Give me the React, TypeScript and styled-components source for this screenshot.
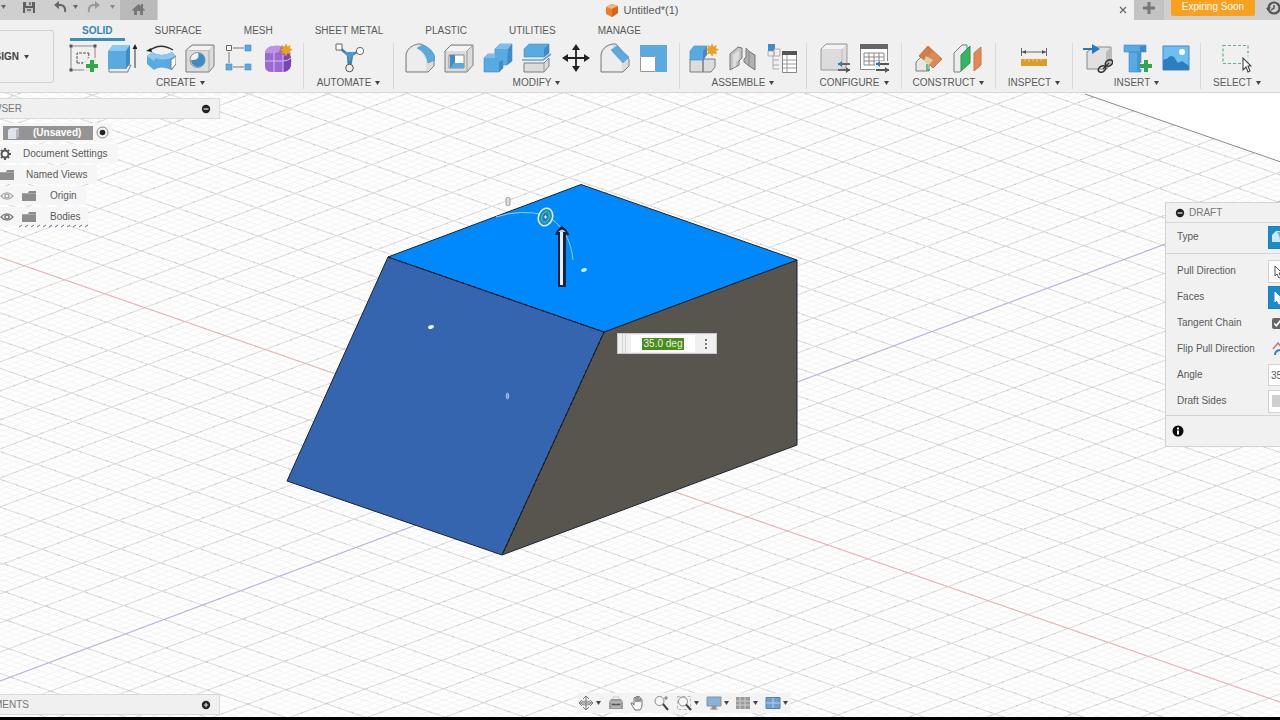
import React from "react";
import styled, { createGlobalStyle, css } from "styled-components";

const GlobalStyle = createGlobalStyle`
  * { box-sizing: border-box; }
  body { margin: 0; background: #000; overflow: hidden; }
  button, input { font: inherit; color: inherit; border: 0; padding: 0; margin: 0; background: none; }
  button { cursor: pointer; }
  svg { display: block; flex: none; }
`;

const Shell = styled.div`
  display: flex;
  flex-direction: column;
  height: 100vh;
  padding-bottom: 3px;
  background: #000;
  color: #5a5a5a;
  font: 10px/12px "Liberation Sans", Arial, sans-serif;
  white-space: nowrap;
`;

/* ---------- title bar ---------- */
const TitleBar = styled.header`
  display: flex;
  height: 20px;
  flex: none;
  background: #f0f0f0;
`;
const QuickBar = styled.div`
  display: flex;
  align-items: center;
  width: 158px;
  height: 20px;
  padding-bottom: 6px;
  background: #cfcfcf;
`;
const QuickButton = styled.button<{ $w: number }>`
  display: flex;
  justify-content: center;
  align-items: center;
  flex: none;
  width: ${(p) => p.$w}px;
  height: 14px;
`;
const HomeTab = styled.button`
  display: flex;
  justify-content: center;
  align-self: flex-start;
  width: 37px;
  height: 20px;
  padding-top: 3px;
  flex: none;
  background: #bababa;
`;
const DocTab = styled.div`
  display: flex;
  flex: 1;
  align-items: center;
  padding: 0 4px 0 10px;
`;
const DocTitle = styled.h1`
  display: flex;
  flex: 1;
  justify-content: center;
  align-items: center;
  gap: 4px;
  margin: 0;
  font-size: 11px;
  font-weight: 400;
  line-height: 14px;
`;
const CloseButton = styled.button`
  width: 14px;
  height: 14px;
  display: grid;
  place-items: center;
`;
const TitleRight = styled.div`
  display: flex;
  width: 146px;
  background: #cfcfcf;
  overflow: hidden;
`;
const NewTab = styled.button`
  display: grid;
  place-items: center;
  flex: none;
  width: 30px;
  height: 20px;
  padding-bottom: 4px;
  background: #c3c3c3;
`;
const Expiring = styled.button`
  width: 84px;
  height: 16px;
  margin: 0 11px 0 7px;
  flex: none;
  padding-bottom: 2px;
  border-radius: 0 0 2px 2px;
  background: #f9a01f;
  color: #fff;
`;
const ClockButton = styled.button`
  flex: none;
  height: 16px;
`;

/* ---------- ribbon ---------- */
const Ribbon = styled.div`
  display: flex;
  height: 73px;
  flex: none;
  background: #f0f0f0;
  border-bottom: 1px solid #d6d6d6;
`;
const Workspace = styled.button`
  display: flex;
  align-items: center;
  justify-content: flex-end;
  gap: 5px;
  width: 54px;
  height: 53px;
  margin: 10px 4px 0 0;
  padding-right: 24px;
  flex: none;
  overflow: hidden;
  border: 1px solid #d2d2d2;
  border-left: 0;
  border-radius: 0 3px 3px 0;
  color: #444;
  font-weight: 700;
`;
const RibbonMain = styled.div`
  flex: 1;
  min-width: 0;
`;
const Tabs = styled.nav`
  display: flex;
  gap: 18px;
  height: 21px;
  padding-left: 12px;
`;
const Tab = styled.button<{ $on?: boolean }>`
  height: 21px;
  padding: 3px 12px 0;
  border-bottom: 3px solid transparent;
  ${(p) =>
    p.$on &&
    css`
      color: #2f87b8;
      font-weight: 700;
      border-color: #3b8dba;
    `}
`;
const Groups = styled.div`
  display: flex;
  padding-top: 2px;
`;
const Group = styled.section<{ $w: number }>`
  width: ${(p) => p.$w}px;
  height: 46px;
  flex: none;
  display: flex;
  flex-direction: column;
  align-items: center;
  & + & { border-left: 1px solid #d9d9d9; }
`;
const Tools = styled.div`
  display: flex;
  gap: 9px;
`;
const Tool = styled.button`
  width: 30px;
  height: 30px;
`;
const GroupLabel = styled.button`
  display: flex;
  align-items: center;
  gap: 4px;
  height: 12px;
  margin-top: 4px;
`;

/* ---------- viewport ---------- */
const Viewport = styled.main`
  position: relative;
  flex: 1;
  min-height: 0;
  overflow: hidden;
  background: #fff;
`;
const Scene = styled.svg`
  width: 100%;
  height: 100%;
`;
const SidePanel = styled.div<{ $bottom?: boolean }>`
  position: absolute;
  left: 0;
  ${(p) => (p.$bottom ? "bottom: 2px;" : "top: 5px;")}
  display: flex;
  align-items: center;
  width: 220px;
  height: 21px;
  padding-right: 8px;
  background: #f0f0f0;
  border: 1px solid #dadada;
  border-left: 0;
`;
const PanelTitle = styled.h2<{ $w: number }>`
  display: flex;
  justify-content: flex-end;
  width: ${(p) => p.$w}px;
  margin: 0 auto 0 0;
  overflow: hidden;
  color: #777;
  font-size: 10px;
  font-weight: 400;
`;
const RoundButton = styled.button`
  width: 10px;
  height: 10px;
`;
const Tree = styled.ul`
  position: absolute;
  left: 0;
  top: 30px;
  margin: 0;
  padding: 0;
  list-style: none;
`;
const TreeRow = styled.li<{ $w: number }>`
  display: flex;
  align-items: center;
  width: ${(p) => p.$w}px;
  height: 19px;
  margin-bottom: 2px;
  background: #f6f6f6;
`;
const Root = styled.span`
  display: flex;
  align-items: center;
  width: 90px;
  height: 14px;
  margin: 0 3px 0 3px;
  padding-left: 4px;
  gap: 11px;
  background: #949494;
  color: #fff;
  font-weight: 700;
`;
const Slot = styled.span<{ $w: number }>`
  width: ${(p) => p.$w}px;
  flex: none;
  overflow: hidden;
`;
const SelectionMark = styled.svg`
  position: absolute;
  left: 18px;
  bottom: 0;
`;

const ValueBox = styled.div`
  position: absolute;
  left: 617px;
  top: 240px;
  display: flex;
  width: 100px;
  height: 21px;
  border: 1px solid #c9c9c9;
  background: #f0f0f0;
`;
const Grip = styled.span`
  width: 4px;
  margin-left: 4px;
  border: solid #d2d2d2;
  border-width: 0 1px;
`;
const ValueField = styled.label`
  display: grid;
  place-items: center;
  width: 64px;
  margin: 1px 0 1px 5px;
  background: #fff;
`;
const ValueInput = styled.input`
  width: 42px;
  height: 12px;
  background: #4d8a20;
  color: #e6f5da;
  text-align: center;
`;
const MoreButton = styled.button`
  flex: 1;
  display: grid;
  place-items: center;
`;

const Draft = styled.aside`
  position: absolute;
  right: 0;
  top: 109px;
  width: 115px;
  overflow: hidden;
  background: #f1f1f1;
  border: 1px solid #d3d3d3;
  border-right: 0;
`;
const DraftHead = styled.div`
  display: flex;
  align-items: center;
  gap: 4px;
  height: 20px;
  padding-left: 9px;
  border-bottom: 1px solid #d9d9d9;
  color: #777;
`;
const DraftRows = styled.div<{ $top: number; $end: number }>`
  padding: ${(p) => p.$top}px 0 ${(p) => p.$end}px;
  border-bottom: 1px solid #d3d3d3;
`;
const DraftRow = styled.div`
  display: grid;
  grid-template-columns: 91px 24px;
  align-items: center;
  height: 26px;
  padding-left: 11px;
`;
const Control = styled.button<{ $on?: boolean }>`
  width: 24px;
  height: 23px;
  padding-left: 2px;
  border: 1px solid ${(p) => (p.$on ? "#1681bd" : "#d2d2d2")};
  background: ${(p) => (p.$on ? "#1b8bc9" : "#fff")};
`;
const FlatControl = styled.button`
  width: 24px;
  height: 22px;
  padding-left: 4px;
`;
const Check = styled.input`
  width: 11px;
  height: 11px;
  margin-left: 4px;
  accent-color: #666;
`;
const AngleInput = styled.input`
  width: 48px;
  height: 22px;
  padding-left: 2px;
  background: #fff;
  border: 1px solid #d2d2d2;
`;
const DraftFoot = styled.div`
  display: flex;
  align-items: center;
  height: 30px;
  padding-left: 6px;
`;

const NavBar = styled.div`
  position: absolute;
  left: 88px;
  right: 0;
  bottom: 4px;
  width: 214px;
  height: 20px;
  margin: 0 auto;
  display: flex;
  align-items: center;
  justify-content: space-between;
  padding: 0 3px 0 1px;
  background: #f3f3f3;
`;
const NavButton = styled.button`
  display: flex;
  align-items: center;
  gap: 2px;
`;

/* ---------- shared glyphs ---------- */
const Caret = ({ c = "#444" }: { c?: string }) => (
  <svg width="5" height="4" viewBox="0 0 5 4"><path d="M0 0h5L2.5 4z" fill={c} /></svg>
);
const Minus = () => (
  <svg width="10" height="10" viewBox="0 0 10 10">
    <circle cx="5" cy="5" r="4.2" fill="#222" /><path d="M2.5 5h5" stroke="#ddd" strokeWidth="1.3" />
  </svg>
);
const Plus = () => (
  <svg width="10" height="10" viewBox="0 0 10 10">
    <circle cx="5" cy="5" r="4.2" fill="#222" /><path d="M2.8 5h4.4M5 2.8v4.4" stroke="#ddd" strokeWidth="1.2" />
  </svg>
);
const Folder = () => (
  <svg width="15" height="12" viewBox="0 0 15 12"><path d="M0 3h6l1-2h7v10H0z" fill="#8d8d8d" /><path d="M0 3.5h14" stroke="#a8a8a8" /></svg>
);
const Eye = ({ c }: { c: string }) => (
  <svg width="14" height="10" viewBox="0 0 14 10">
    <path d="M1 5Q7-1.500 13 5Q7 11.500 1 5z" fill="none" stroke={c} strokeWidth="1.2" /><circle cx="7" cy="5" r="2" fill="none" stroke={c} strokeWidth="1.5" />
  </svg>
);
const Pointer = ({ c, f }: { c: string; f: string }) => (
  <svg width="14" height="15" viewBox="0 0 14 15"><path d="M4 2v10l2-2 2 4 2-1-2-4h3z" fill={f} stroke={c} /></svg>
);

const G = "#dcdcdc";
const D = "#7d7d7d";
const B = "#5aaae2";
const DB = "#3d8cc8";

const Star = () => (
  <path d="M23 1l1.300 3 3-1.500-1 3 3 1-3 1.500 1.500 3-3.300-1-1.500 3-1.500-3-3.300 1 1.500-3-3-1.500 3-1-1-3 3 1.500z" fill="#eba21c" stroke="#d98c0c" strokeWidth=".5" />
);
const GreenPlus = () => <path d="M24 17v12M18 23h12" stroke="#2fa84a" strokeWidth="4" />;

const icons: Record<string, React.ReactNode> = {
  "Create Sketch": (<>
    <path d="M3 3h24v24H3z" fill="none" stroke="#888" />
    <path d="M9 20V10h12M9 20h6M21 10c0 6-3 9-7 10" fill="none" stroke="#555" strokeDasharray="3 1" />
    <path d="M1.500 1.500h3v3h-3zM25.500 1.500h3v3h-3zM1.500 25.500h3v3h-3z" fill="#555" /><path d="M16 15h14v15H16z" fill="#f0f0f0" opacity=".8" /><GreenPlus />
  </>),
  Extrude: (<>
    <path d="M2 25l5-3h17l-3 6v1H2z" fill="#eee" stroke={D} />
    <path d="M1 8l5-6h17v18l-4 6H1z" fill={B} /><path d="M1 8l5-6h17l-4 6z" fill="#8dc8f1" /><path d="M19 8l4-6v18l-4 6z" fill={DB} />
    <path d="M28 5v20" stroke="#333" /><path d="M28 1l-2.500 5h5z" fill="#222" />
  </>),
  Revolve: (<>
    <path d="M3 8Q14-1 27 7" fill="none" stroke="#333" strokeWidth="1.300" /><path d="M0 8l5-3 1 4z" fill="#222" />
    <path d="M1 13l5-4q9 6 20 0l4 4v8l-4 6q-12-5-18 0l-7-6z" fill={B} /><path d="M1 13l5-4q9 6 20 0l4 4q-12 6-20 2l-2 3z" fill="#8dc8f1" />
    <path d="M25 17l5-4v8l-5 6z" fill="#fff" stroke={D} />
  </>),
  Hole: (<>
    <path d="M1 7l6-5h22v21l-5 6H1z" fill={G} stroke={D} /><path d="M1 7h23v22M24 7l5-5" fill="none" stroke="#aaa" />
    <path d="M2 7l6-4h20l-4 4z" fill="#f3f3f3" /><circle cx="12.500" cy="17" r="7.500" fill="#f4f4f4" stroke="#888" /><path d="M13 10a7 7 0 1 1-7 7h2c6 0 6-4 5-7z" fill={DB} />
  </>),
  Pattern: (<>
    <path d="M9 5h11M5 9v11M9 24h11" stroke="#777" /><path d="M2.500 2.500h5v5h-5z" fill="#fff" stroke="#666" />
    <path d="M21 2h6v6h-6zM2 21h6v6H2zM21 21h6v6h-6z" fill={B} stroke={DB} strokeWidth=".6" />
  </>),
  "Create Form": (<>
    <path d="M2 10q0-3 4-6 5-2 12-1l8 7 2 6v7q-2 6-9 6H9q-7 0-7-6z" fill="#9a6ad0" />
    <path d="M2 10q1-3 4-6 6-2 12-1l-2 6q-4 2-10 1z" fill="#bb94e6" /><path d="M20 14l6-4q3 3 2 12-1 6-8 7z" fill="#7946b4" />
    <path d="M11 10v19M2 18h18q5 0 8-3M20 12v17" fill="none" stroke="#d7bdf2" strokeWidth="1" /><Star />
  </>),
  Automate: (<>
    <path d="M6 5l8 7h4l8-5M14 12l1 12M18 12l-2 12" fill="none" stroke="#3c85b5" strokeWidth="2.500" />
    <path d="M11 9h10l-5 8z" fill="#4c9ac9" />
    <path d="M2 1h6v6H2z" fill="#fff" stroke="#666" /><circle cx="26" cy="8" r="3.600" fill="#fff" stroke="#666" /><circle cx="15.500" cy="25" r="3.800" fill="#eee" stroke="#555" />
  </>),
  Fillet: (<>
    <path d="M1 29V11q2-8 12-10h3q12 5 13 15v7l-6 6z" fill={G} stroke={D} /><path d="M2 11Q5 3 13 2l8 15v11H2z" fill="#ededed" />
    <path d="M12 5l6-3q10 4 12 12v3l-7 3q-1-10-11-15z" fill={B} stroke={DB} strokeWidth=".5" />
  </>),
  Shell: (<>
    <path d="M1 8l6-6h22v20l-6 7H1z" fill={G} stroke={D} /><path d="M2 8l5-5h21l-5 5z" fill="#f4f4f4" /><path d="M23 8v21M23 8l6-6" stroke="#999" />
    <path d="M5 12h15v13H5z" fill="#fff" stroke="#888" /><path d="M6 12h5v8l9 0v5H6z" fill={B} /><path d="M6 25V12l5 0v7z" fill={DB} />
  </>),
  Combine: (<>
    <path d="M1 15l4-4h7V6l5-5h12v17l-5 4h-4v3l-4 4H1z" fill={B} stroke={DB} strokeWidth=".6" />
    <path d="M1 15l4-4h7v4zM12 6l5-5h12l-4 5z" fill="#7cbef0" /><path d="M25 6l4-5v17l-5 4zM16 19l4-2v8l-4 4z" fill={DB} />
  </>),
  "Split Body": (<>
    <path d="M2 6l5-5h20v9l-5 4H2z" fill={B} stroke={DB} strokeWidth=".6" /><path d="M22 6l5-5v9l-5 4z" fill={DB} />
    <path d="M0 17h21l8-6" fill="none" stroke="#56a5dc" strokeWidth="1.600" /><path d="M2 20h20l5-5v8l-5 6H2z" fill={G} stroke={D} /><path d="M22 20v9" stroke="#999" />
  </>),
  Move: (<>
    <path d="M15 4v22M4 15h22" stroke="#222" strokeWidth="1.800" />
    <path d="M15 1l4 6h-8zM15 29l4-6h-8zM1 15l6-4v8zM29 15l-6-4v8z" fill="#222" />
  </>),
  Chamfer: (<>
    <path d="M1 29V11q2-8 11-10h4l13 15v7l-6 6z" fill={G} stroke={D} /><path d="M2 12Q4 4 12 2l10 17v9H2z" fill="#ededed" />
    <path d="M11 7l6-4 12 11-6 6z" fill={B} stroke={DB} strokeWidth=".5" />
  </>),
  Scale: (<><path d="M1 2h27v27H17V13H1z" fill={B} /><path d="M1.500 13.500h15v15h-15z" fill="#fff" stroke="#999" /></>),
  "New Component": (<>
    <path d="M1 16h13v13H1zM14 16h12v8l-4 5h-8z" fill={G} stroke={D} /><path d="M1 8l4-5h13l-3 5v9H1z" fill={B} stroke={DB} strokeWidth=".6" /><path d="M14 8l4-5v9l-4 5z" fill={DB} /><Star />
  </>),
  Joint: (<>
    <path d="M2 11l8-7 4 1v10l-3 3v4l-9 5z" fill="#c4c4c4" stroke="#777" /><path d="M5 12l6-5v9l-3 3v4l-3 2z" fill="#dedede" />
    <path d="M18 5l4 4 5 3v15l-6-4-5-4v-3l2-2z" fill="#b0b0b0" stroke="#777" /><path d="M18 5l3 3v14" fill="none" stroke="#888" />
  </>),
  "Bill of Materials": (<>
    <path d="M1 1h7v7H1z" fill={DB} /><path d="M1 8h6v5H1zM7 6h6v7H7z" fill="#eee" stroke="#999" strokeWidth=".7" /><path d="M6 13v13M6 17h6M6 22h6M6 26h6" stroke="#aaa" />
    <path d="M15.500 9.500h14v20h-14z" fill="#fff" stroke="#888" /><path d="M15 8h15v4H15z" fill="#555" /><path d="M16 17h13M16 21h13M16 25h13M20 12v17" stroke="#999" />
  </>),
  Configure: (<>
    <path d="M1 6l5-5h21v20l-3 6H1z" fill={G} stroke="#999" /><path d="M2 6l4-4h20l-4 4z" fill="#f3f3f3" /><path d="M22 6v20" stroke="#bbb" />
    <path d="M18 21h12M18 27h12" stroke="#666" strokeWidth="2" /><path d="M18 21l4-3v6z" fill="#2582c4" /><path d="M30 27l-4-3v6z" fill="#555" />
  </>),
  "Configuration Table": (<>
    <path d="M1.500 2.500h27v24h-27z" fill="#fff" stroke="#888" /><path d="M1 1h28v5H1z" fill="#666" />
    <path d="M5 10h20v12H5zM5 14h20M5 18h20M10 10v12M15 10v12M20 10v12" fill="none" stroke="#888" /><path d="M16 18h14v12H16z" fill="#f0f0f0" />
    <path d="M17 21h13M17 27h13" stroke="#555" strokeWidth="2" /><path d="M17 21l4-3v6z" fill="#2582c4" /><path d="M30 27l-4-3v6z" fill="#555" />
  </>),
  "Offset Plane": (<>
    <path d="M2 19l5-5 8 6v8H2z" fill="#e6e6e6" stroke={D} /><path d="M5 13l9-10 14 13-9 9-6-6z" fill="#dd8a5a" stroke="#c57443" />
    <path d="M5 13l9-10 5 5-8 9z" fill="#d27c4d" /><path d="M12 13l7 4-4 5-5-4z" fill="#d3d6a2" /><path d="M13 21v6h3" fill="none" stroke="#3db36a" strokeWidth="1.500" />
  </>),
  Midplane: (<>
    <path d="M1 10l8-8h5v20l-7 7H1z" fill="#ececec" stroke={D} /><path d="M8 12l9-9v17l-9 8z" fill="#35b562" stroke="#279a50" />
    <path d="M21 10l7-6v18l-7 6z" fill="#e28a57" stroke="#c97444" />
  </>),
  Measure: (<><path d="M2 9h26M2.500 5v8M27.500 5v8" stroke="#666" /><path d="M3 9l4-2v4zM27 9l-4-2v4z" fill="#555" /><path d="M2 16h26v7H2z" fill="#dd9c24" /><path d="M6 16v2M10 16v3M14 16v2M18 16v3M22 16v2" stroke="#f4cf80" /></>),
  "Insert Derive": (<>
    <path d="M4 9l7-5h17v16l-4 6H4z" fill="#e0e0e0" stroke="#888" /><path d="M23 9l5-5v16l-5 6z" fill="#bbb" />
    <path d="M0 5h9V1l8 5-8 5V7H0z" fill="#1e7dc4" />
    <path d="M20 26l6-6" stroke="#333" strokeWidth="1.300" /><ellipse cx="19" cy="26" rx="4" ry="2.800" transform="rotate(-35 19 26)" fill="none" stroke="#333" strokeWidth="1.600" /><ellipse cx="26" cy="20" rx="4" ry="2.800" transform="rotate(-35 26 20)" fill="none" stroke="#333" strokeWidth="1.600" />
  </>),
  "Insert Fastener": (<>
    <path d="M2 2h22v7H2zM7 9h12v20H7z" fill={B} stroke={DB} strokeWidth=".6" /><path d="M18 3h6v6h-6z" fill={DB} /><path d="M15 9h4v20h-4z" fill="#4796d2" />
    <path d="M24 17v12M18 23h12" stroke="#f0f0f0" strokeWidth="6" /><GreenPlus />
  </>),
  Canvas: (<>
    <path d="M2 3h26v24H2z" fill="#70bdf1" stroke={DB} /><circle cx="21" cy="9" r="3" fill="#fff" /><path d="M2 27v-9q2-3 4-2 3-5 7-2l4 6 4-2 7 5v4z" fill="#2a7fbe" />
  </>),
  Select: (<>
    <path d="M1 2.500h25v18H1z" fill="none" stroke="#5fb482" strokeDasharray="3 2" strokeWidth="1.200" />
    <path d="M20 13h9v17H20z" fill="#f0f0f0" opacity=".7" /><path d="M21 15v12l3-3 2 5 2-1-2-5h3z" fill="#fff" stroke="#444" strokeWidth="1.100" />
  </>),
};

const groups: { name: string; w: number; tools: string[] }[] = [
  { name: "CREATE", w: 245, tools: ["Create Sketch", "Extrude", "Revolve", "Hole", "Pattern", "Create Form"] },
  { name: "AUTOMATE", w: 90, tools: ["Automate"] },
  { name: "MODIFY", w: 286, tools: ["Fillet", "Shell", "Combine", "Split Body", "Move", "Chamfer", "Scale"] },
  { name: "ASSEMBLE", w: 127, tools: ["New Component", "Joint", "Bill of Materials"] },
  { name: "CONFIGURE", w: 95, tools: ["Configure", "Configuration Table"] },
  { name: "CONSTRUCT", w: 94, tools: ["Offset Plane", "Midplane"] },
  { name: "INSPECT", w: 77, tools: ["Measure"] },
  { name: "INSERT", w: 128, tools: ["Insert Derive", "Insert Fastener", "Canvas"] },
  { name: "SELECT", w: 73, tools: ["Select"] },
];
const tabs = ["SOLID", "SURFACE", "MESH", "SHEET METAL", "PLASTIC", "UTILITIES", "MANAGE"];

/* ---------- ground grid ---------- */
const O = [150, 392.7];
const U = [40.15, 13.95];
const V = [-38.4, 14.4];
const path = (from: number[], step: number[], dir: number[], n: number) => {
  const x = from[0] + step[0] * n;
  const y = from[1] + step[1] * n;
  return `M${x - dir[0] * 45} ${y - dir[1] * 45}L${x + dir[0] * 45} ${y + dir[1] * 45}`;
};
const range = (a: number, b: number, s: number) => Array.from({ length: Math.round((b - a) / s) + 1 }, (_, i) => a + i * s);
const family = (s: number) =>
  range(-35, 40, s).map((n) => path(O, V, U, n)).join("") + range(-35, 40, s).map((n) => path(O, U, V, n)).join("");
const minor = family(0.2);
const major = family(1);

const Ground = () => (
  <Scene viewBox="0 93 1280 624" preserveAspectRatio="xMidYMid slice" aria-label="Model canvas">
    <defs>
      <clipPath id="plane"><path d="M-400-422L1085 94 1900 377V1200H-400z" /></clipPath>
    </defs>
    <g clipPath="url(#plane)" fill="none">
      <path d="M-400-422L1085 94 1900 377V1200H-400z" fill="#fefefe" />
      <path d={minor} stroke="#f3f3f3" strokeWidth=".8" />
      <path d={major} stroke="#d9d9d9" strokeWidth=".9" />
      <path d={major} stroke="#c6c6c6" strokeWidth=".9" strokeDasharray="2 12" />
      <path d={path(O, V, U, -3)} stroke="#eeb3b3" />
      <path d={path(O, U, V, 8)} stroke="#b4b4e4" />
    </g>
    <path d="M1085 94L1900 377" stroke="#8a8a8a" />
    <g stroke="#1b2430" strokeWidth="1" strokeLinejoin="round">
      <path d="M604 332L797 260V445L502 555z" fill="#57554d" />
      <path d="M388 257L604 332 502 555 287 481z" fill="#3565ae" />
      <path d="M581 184.500L797 260 604 332 388 257z" fill="#0089fd" />
    </g>
    <path d="M388 257L604 332 502 555" fill="none" stroke="#101820" strokeDasharray="3 3" />
    <path d="M496 217Q520 209 545 215 570 228 573 260" fill="none" stroke="#8fd0ff" strokeWidth="1" />
    <ellipse cx="545.500" cy="217" rx="7" ry="9" transform="rotate(20 545.500 217)" fill="#1c8fb8" stroke="#d6f1fb" strokeWidth="1.600" />
    <ellipse cx="545.500" cy="217" rx="3.500" ry="5.500" transform="rotate(20 545.500 217)" fill="#1684ae" stroke="#7cc9e4" strokeWidth=".7" />
    <path d="M544 217h3M545.500 215.500v3" stroke="#fff" />
    <path d="M562 226q6 4 7 9h-3v52h-8v-52h-3q1-5 7-9z" fill="#10253c" />
    <path d="M560 232h3v53h-3z" fill="#e9eef2" /><path d="M558.500 232q3.500-5 7 0z" fill="#c8ccd0" />
    <ellipse cx="584" cy="270" rx="3" ry="1.800" transform="rotate(-20 584 270)" fill="#cfe9ff" />
    <ellipse cx="431" cy="327" rx="3" ry="1.800" transform="rotate(-20 431 327)" fill="#f5f7fb" />
    <ellipse cx="507.500" cy="396" rx="1.300" ry="3" fill="#7c9dd0" stroke="#c6d5ee" strokeWidth=".7" />
    <rect x="506" y="197.500" width="4" height="8" rx="1.500" fill="#ddd" stroke="#888" strokeWidth=".8" />
  </Scene>
);

const nav: { name: string; caret?: boolean; art: React.ReactNode }[] = [
  { name: "Orbit", caret: true, art: <><path d="M8 2v12M2 8h12M5 4l3-3 3 3M5 12l3 3 3-3M4 5L1 8l3 3M12 5l3 3-3 3" fill="none" stroke="#777" /><ellipse cx="8" cy="8" rx="5" ry="2" fill="none" stroke="#888" /></> },
  { name: "Look At", art: <><path d="M1 7l2-3h10l2 3v7H1z" fill="#999" /><path d="M2 7h12M3 12h10M5 4V2h6v2" fill="none" stroke="#ccc" /><path d="M4 9.500h8" stroke="#555" /></> },
  { name: "Pan", art: <path d="M5 15q-3-4-4-7 2-1 3 2V3q1-2 2 0v4-5q1-2 2 0v5-5q1-1 2 0v5-3q2-1 2 1v5q0 3-2 5z" fill="#f7f7f7" stroke="#777" /> },
  { name: "Zoom", art: <><circle cx="6.500" cy="6" r="4.500" fill="#f7f7f7" stroke="#888" /><path d="M10 9l5 6" stroke="#444" strokeWidth="2" /><path d="M11 3h4M13 1v4" stroke="#777" /></> },
  { name: "Fit", caret: true, art: <><path d="M1.500 1.500h13v13h-13z" fill="none" stroke="#bbb" strokeDasharray="3 2" /><circle cx="7" cy="6.500" r="4.500" fill="#f7f7f7" stroke="#888" /><path d="M10 9.500l5 5.500" stroke="#444" strokeWidth="2" /></> },
  { name: "Display Settings", caret: true, art: <><path d="M1 2h14v9H1z" fill="#86b3db" stroke="#8a9199" /><path d="M6 11h4v3H6zM4 14h8" fill="#888" stroke="#999" /></> },
  { name: "Grid and Snaps", caret: true, art: <><path d="M1 2h14v12H1z" fill="#9b9b9b" /><path d="M1 6h14M1 10h14M5 2v12M10 2v12" stroke="#cfcfcf" /></> },
  { name: "Viewports", caret: true, art: <><path d="M1 2.500h14v11H1z" fill="#6f9fd0" stroke="#5c7fa6" /><path d="M8 3v10M1 8h14" stroke="#b7d2ec" /></> },
];

export default function App() {
  return (
    <Shell>
      <GlobalStyle />
      <TitleBar>
        <QuickBar>
          <QuickButton $w={6} aria-label="File menu"><Caret c="#666" /></QuickButton>
          <QuickButton $w={46} aria-label="Save">
            <svg width="14" height="13" viewBox="0 0 14 13"><path d="M1 1h12v11H1z" fill="#606060" /><path d="M4 1h6v4H4zM3 7h8v5H3z" fill="#c4c4c4" /><path d="M8 1v3M5 9h4" stroke="#606060" strokeWidth="1.500" /></svg>
          </QuickButton>
          <QuickButton $w={16} aria-label="Undo">
            <svg width="13" height="12" viewBox="0 0 13 12"><path d="M3 4h4q5 1 4 7" fill="none" stroke="#666" strokeWidth="2" /><path d="M0 4l5-4v8z" fill="#666" /></svg>
          </QuickButton>
          <QuickButton $w={14} aria-label="Undo history"><Caret c="#666" /></QuickButton>
          <QuickButton $w={22} aria-label="Redo">
            <svg width="13" height="12" viewBox="0 0 13 12"><path d="M10 4H6Q1 5 2 11" fill="none" stroke="#999" strokeWidth="2" /><path d="M13 4L8 0v8z" fill="#999" /></svg>
          </QuickButton>
          <QuickButton $w={16} aria-label="Redo history"><Caret c="#888" /></QuickButton>
          <HomeTab aria-label="Home">
            <svg width="13" height="13" viewBox="0 0 13 13"><path d="M0 7l6.500-6 2.500 2V1h2v4l2 2-1 1-1-1v5H8V8H5v4H2V7L1 8z" fill="#777" /></svg>
          </HomeTab>
        </QuickBar>
        <DocTab>
          <DocTitle>
            <svg width="14" height="14" viewBox="0 0 14 14"><path d="M1 4l6-3 6 2v7l-6 4-6-3z" fill="#ee7d2b" /><path d="M1 4l6-3 6 2-6 3z" fill="#f8b27c" /><path d="M7 6l6-3v7l-6 4z" fill="#d9651a" /></svg>
            Untitled*(1)
          </DocTitle>
          <CloseButton aria-label="Close document">
            <svg width="8" height="8" viewBox="0 0 8 8"><path d="M1 1l6 6M7 1L1 7" stroke="#666" strokeWidth="1.200" /></svg>
          </CloseButton>
        </DocTab>
        <TitleRight>
          <NewTab aria-label="New tab"><svg width="12" height="12" viewBox="0 0 12 12"><path d="M6 0v12M0 6h12" stroke="#777" strokeWidth="3" /></svg></NewTab>
          <Expiring>Expiring Soon</Expiring>
          <ClockButton aria-label="Job status">
            <svg width="16" height="15" viewBox="0 0 16 15"><circle cx="8" cy="7" r="5.500" fill="none" stroke="#555" strokeWidth="2.200" /><path d="M8 4v3l-3 2" fill="none" stroke="#555" strokeWidth="1.500" /><path d="M0 7l5-1-3 4z" fill="#555" /></svg>
          </ClockButton>
        </TitleRight>
      </TitleBar>

      <Ribbon>
        <Workspace>DESIGN<Caret /></Workspace>
        <RibbonMain>
          <Tabs>{tabs.map((t, i) => <Tab key={t} $on={i === 0}>{t}</Tab>)}</Tabs>
          <Groups>
            {groups.map((g) => (
              <Group key={g.name} $w={g.w}>
                <Tools>
                  {g.tools.map((t) => (
                    <Tool key={t} aria-label={t}><svg width="30" height="30" viewBox="0 0 30 30">{icons[t]}</svg></Tool>
                  ))}
                </Tools>
                <GroupLabel>{g.name}<Caret /></GroupLabel>
              </Group>
            ))}
          </Groups>
        </RibbonMain>
      </Ribbon>

      <Viewport>
        <Ground />

        <SidePanel>
          <PanelTitle $w={22}>BROWSER</PanelTitle>
          <RoundButton aria-label="Collapse browser"><Minus /></RoundButton>
        </SidePanel>
        <Tree>
          <TreeRow $w={112}>
            <Root>
              <svg width="15" height="12" viewBox="0 0 15 12"><path d="M1 3l3-2h8v8l-3 3H1z" fill="#dfe3ea" /><path d="M9 3l3-2v8l-3 3z" fill="#b5bac2" /></svg>
              (Unsaved)
            </Root>
            <svg width="13" height="13" viewBox="0 0 13 13"><circle cx="6.500" cy="6.500" r="5.500" fill="#f4f4f4" stroke="#888" /><circle cx="6.500" cy="6.500" r="2.800" fill="#222" /></svg>
          </TreeRow>
          <TreeRow $w={118}>
            <Slot $w={23}><svg width="12" height="12" viewBox="0 0 12 12"><circle cx="5" cy="6" r="3.500" fill="none" stroke="#555" strokeWidth="2" /><path d="M5 0v2M5 10v2M0 6H-1M9 6h2M1 2l1 1M9 2L8 3M1 10l1-1M9 10L8 9" stroke="#555" strokeWidth="2" /></svg></Slot>
            Document Settings
          </TreeRow>
          <TreeRow $w={97}><Slot $w={26}><Folder /></Slot>Named Views</TreeRow>
          <TreeRow $w={86}><Slot $w={22}><Eye c="#aaa" /></Slot><Slot $w={28}><Folder /></Slot>Origin</TreeRow>
          <TreeRow $w={88}><Slot $w={22}><Eye c="#777" /></Slot><Slot $w={28}><Folder /></Slot>Bodies</TreeRow>
          <SelectionMark width="72" height="5" viewBox="0 0 72 5">
            <path d="M1 4l3-2M7 4l3-2M13 4l3-2M19 4l3-2M25 4l3-2M31 4l3-2M37 4l3-2M43 4l3-2M49 4l3-2M55 4l3-2M61 4l3-2M67 4l3-2" stroke="#6d7086" />
          </SelectionMark>
        </Tree>

        <ValueBox>
          <Grip />
          <ValueField><ValueInput aria-label="Angle value" defaultValue="35.0 deg" /></ValueField>
          <MoreButton aria-label="More options"><svg width="4" height="12" viewBox="0 0 4 12"><path d="M1 1h2v2H1zM1 5h2v2H1zM1 9h2v2H1z" fill="#777" /></svg></MoreButton>
        </ValueBox>

        <Draft>
          <DraftHead><Minus />DRAFT</DraftHead>
          <DraftRows $top={1} $end={3}>
            <DraftRow>Type<Control $on aria-label="Draft type"><svg width="18" height="16" viewBox="0 0 18 16"><path d="M1 13V6l4-4h9v11z" fill="#cfe8f8" /><path d="M6 3q3 4 3 10h5V3z" fill="#6ab4e3" /></svg></Control></DraftRow>
          </DraftRows>
          <DraftRows $top={4} $end={1}>
            <DraftRow>Pull Direction<Control aria-label="Select pull direction"><Pointer c="#555" f="#fff" /></Control></DraftRow>
            <DraftRow>Faces<Control $on aria-label="Select faces"><Pointer c="#fff" f="#fff" /></Control></DraftRow>
            <DraftRow><label htmlFor="chain">Tangent Chain</label><Check id="chain" type="checkbox" defaultChecked /></DraftRow>
            <DraftRow>Flip Pull Direction<FlatControl aria-label="Flip pull direction"><svg width="18" height="16" viewBox="0 0 18 16"><path d="M1 8l5-6 4 5" fill="none" stroke="#c77" strokeWidth="1.500" /><path d="M3 14q0-5 6-5" fill="none" stroke="#2b88c8" strokeWidth="2" /></svg></FlatControl></DraftRow>
            <DraftRow><label htmlFor="angle">Angle</label><AngleInput id="angle" defaultValue="35.0 deg" /></DraftRow>
            <DraftRow>Draft Sides<Control aria-label="Draft sides"><svg width="18" height="12" viewBox="0 0 18 12"><path d="M1 0h17v12H1z" fill="#cfcfcf" /></svg></Control></DraftRow>
          </DraftRows>
          <DraftFoot>
            <svg width="12" height="12" viewBox="0 0 12 12"><circle cx="6" cy="6" r="5.500" fill="#0d0d0d" /><path d="M5 2.500h2v2H5zM5 5.500h2v4H5z" fill="#fff" /></svg>
          </DraftFoot>
        </Draft>

        <SidePanel $bottom>
          <PanelTitle $w={29}>COMMENTS</PanelTitle>
          <RoundButton aria-label="Expand comments"><Plus /></RoundButton>
        </SidePanel>

        <NavBar>
          {nav.map((n) => (
            <NavButton key={n.name} aria-label={n.name}>
              <svg width="16" height="16" viewBox="0 0 16 16">{n.art}</svg>
              {n.caret && <Caret />}
            </NavButton>
          ))}
        </NavBar>
      </Viewport>
    </Shell>
  );
}
